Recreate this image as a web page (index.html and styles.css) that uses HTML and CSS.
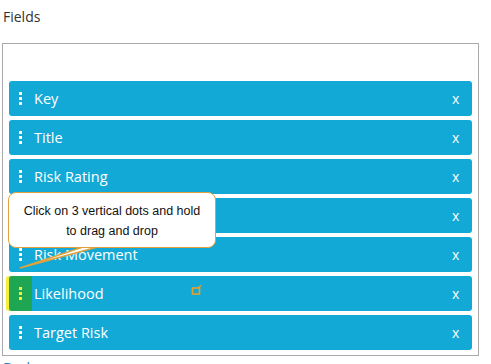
FILE: index.html
```html
<!DOCTYPE html>
<html lang="en">
<head>
    <meta charset="UTF-8">
    <meta name="viewport" content="width=device-width, initial-scale=1.0">
    <title>Fields</title>
    <link rel="stylesheet" href="styles.css">
</head>
<body>
    <div class="page">
        <div class="label">Fields</div>
        <div class="field-box">
            <div class="field-row"><span class="handle"><i></i><i></i><i></i></span><span class="name">Key</span><span class="remove">x</span></div>
            <div class="field-row"><span class="handle"><i></i><i></i><i></i></span><span class="name">Title</span><span class="remove">x</span></div>
            <div class="field-row"><span class="handle"><i></i><i></i><i></i></span><span class="name">Risk Rating</span><span class="remove">x</span></div>
            <div class="field-row"><span class="handle"><i></i><i></i><i></i></span><span class="name">Risk Owner</span><span class="remove">x</span></div>
            <div class="field-row"><span class="handle"><i></i><i></i><i></i></span><span class="name">Risk Movement</span><span class="remove">x</span></div>
            <div class="field-row highlight"><span class="handle"><i></i><i></i><i></i></span><span class="name">Likelihood</span>
                <svg class="drag-icon" width="12" height="12" viewBox="0 0 12 12"><rect x="1.5" y="4" width="7" height="6" fill="none" stroke="#e6a12c" stroke-width="1.6"/><path d="M7 4 L10 1.5" stroke="#e6a12c" stroke-width="1.6"/></svg>
                <span class="remove">x</span></div>
            <div class="field-row"><span class="handle"><i></i><i></i><i></i></span><span class="name">Target Risk</span><span class="remove">x</span></div>

            <div class="tip">
                <svg class="tip-tail" width="110" height="80" viewBox="0 0 110 80"><path d="M70 54 L4 76 L100 50" fill="#fff" stroke="#e0a23c" stroke-width="1.5"/></svg>
                <div class="tip-text">Click on 3 vertical dots and hold to drag and drop</div>
            </div>
        </div>
        <a class="back" href="#">Back</a>
    </div>
</body>
</html>
```

FILE: styles.css
```css
body {
    margin: 0;
    font-family: "Open Sans", Arial, sans-serif;
    background-color: #fff;
    overflow: hidden;
}

.page {
    padding: 7px 2px 0 2px;
}

.label {
    font-size: 14px;
    color: #333;
    padding-left: 1px;
    height: 36px;
}

.field-box {
    position: relative;
    width: 463px;
    border: 1px solid #aaa;
    padding: 37px 6px 1px 6px;
}

.field-row {
    position: relative;
    display: flex;
    align-items: center;
    height: 35px;
    margin-bottom: 4px;
    background-color: #13a9d6;
    border-radius: 3px;
    color: #fff;
    font-size: 14.5px;
}

.handle {
    display: flex;
    flex-direction: column;
    justify-content: center;
    gap: 2px;
    width: 23px;
    height: 100%;
    align-items: center;
    border-radius: 3px 0 0 3px;
}

.handle i {
    display: block;
    width: 3px;
    height: 3px;
    background-color: #fff;
}

.name {
    flex: 1;
    padding-left: 2px;
}

.remove {
    width: 20px;
    font-size: 14px;
}

.highlight .handle {
    background-color: #1ea652;
    box-shadow: -3px 0 0 #f4ee3a;
}

.highlight .handle i {
    background-color: #f4ee3a;
}

.drag-icon {
    position: absolute;
    left: 182px;
    top: 8px;
}

.tip {
    position: absolute;
    left: 5px;
    top: 148px;
    width: 208px;
    height: 56px;
}

.tip-tail {
    position: absolute;
    left: 8px;
    top: 0;
}

.tip-text {
    position: relative;
    height: 100%;
    box-sizing: border-box;
    background-color: #fff;
    border: 1.5px solid #e0a23c;
    border-radius: 8px;
    font-family: Arial, "Liberation Sans", sans-serif;
    font-size: 12.5px;
    line-height: 20px;
    color: #111;
    text-align: center;
    padding: 8px 14px 0 14px;
}

.back {
    display: block;
    margin-top: 2px;
    padding-left: 1px;
    color: #337ab7;
    font-size: 14px;
    text-decoration: none;
}
```
